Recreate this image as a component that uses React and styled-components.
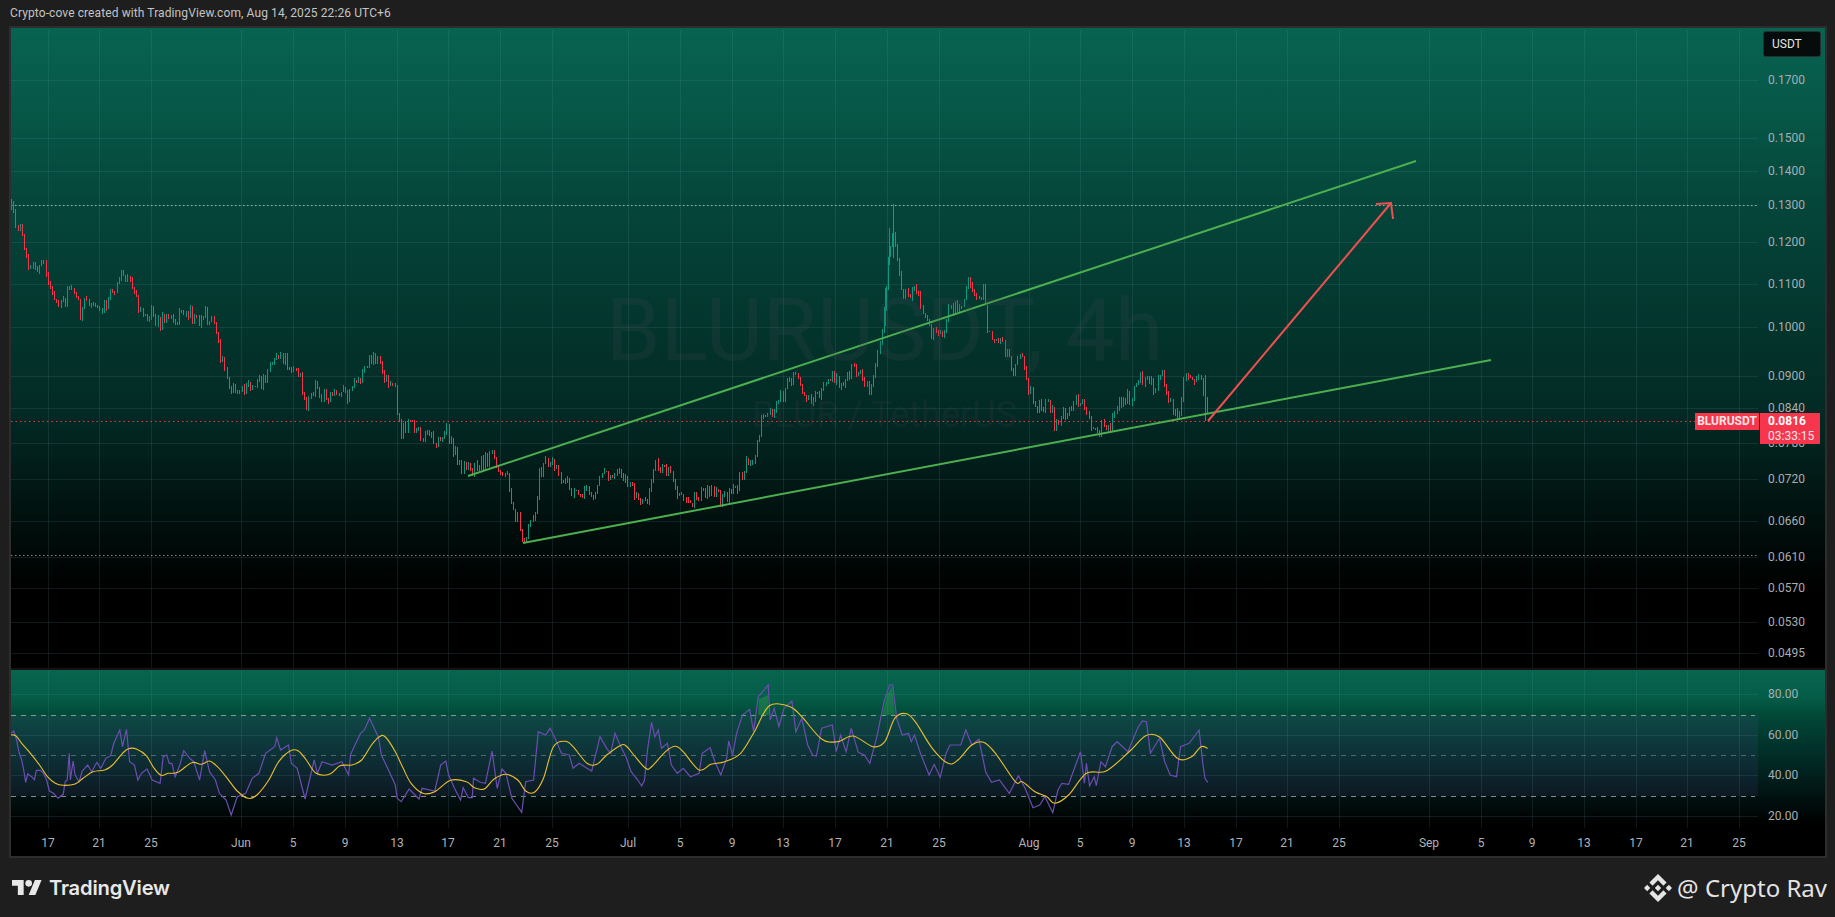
import styled, { createGlobalStyle } from "styled-components";

const GlobalStyle = createGlobalStyle`
  html, body {
    margin: 0;
    padding: 0;
    background: #1e1e1e;
  }
`;

// price axis ticks, y is page px
const PRICE_TICKS = [
  ["0.1700", 80], ["0.1500", 138], ["0.1400", 171], ["0.1300", 205], ["0.1200", 242],
  ["0.1100", 284], ["0.1000", 327], ["0.0900", 376], ["0.0840", 408], ["0.0780", 443],
  ["0.0720", 479], ["0.0660", 521], ["0.0610", 557], ["0.0570", 588], ["0.0530", 622], ["0.0495", 653],
];
const RSI_TICKS = [["80.00", 694], ["60.00", 735], ["40.00", 775], ["20.00", 816]];

const TIME_TICKS = [
  ["17", 48], ["21", 99], ["25", 151], ["Jun", 241], ["5", 293], ["9", 345], ["13", 397], ["17", 448],
  ["21", 500], ["25", 552], ["Jul", 628], ["5", 680], ["9", 732], ["13", 783], ["17", 835], ["21", 887],
  ["25", 939], ["Aug", 1029], ["5", 1080], ["9", 1132], ["13", 1184], ["17", 1236], ["21", 1287],
  ["25", 1339], ["Sep", 1429], ["5", 1481], ["9", 1532], ["13", 1584], ["17", 1636], ["21", 1687], ["25", 1739],
];

// traced closes, taken in three runs off the picture
const scale = (pts, ox, oy, sx, sy) => pts.map(([x, y]) => [ox + x / sx, oy + y / sy]);

const closes = [
  [11, 205],
  ...scale(
    [[35, 60], [50, 100], [65, 140], [75, 180], [85, 240], [100, 235], [130, 225], [145, 270], [155, 320], [175, 335],
     [200, 320], [212, 275], [230, 310], [240, 370], [260, 340], [290, 350], [315, 335], [335, 320], [360, 270], [380, 255],
     [395, 270], [402, 320], [420, 365], [450, 370], [480, 405], [500, 375], [530, 385], [560, 365], [600, 385], [620, 375],
     [650, 410], [660, 490], [685, 560], [695, 610], [720, 585], [750, 600], [790, 570], [810, 515], [835, 500], [870, 520],
     [900, 565], [915, 640], [925, 650], [945, 590], [960, 620], [1000, 605], [1040, 620], [1060, 595], [1085, 555], [1110, 510],
     [1140, 520], [1155, 570], [1185, 610], [1195, 700], [1205, 730], [1222, 705], [1260, 730], [1300, 740], [1310, 770], [1340, 715]],
    0, 190, 3, 3
  ),
  ...scale(
    [[25, 340], [50, 350], [60, 370], [80, 345], [130, 320], [140, 370], [175, 385], [190, 470], [215, 540], [225, 570],
     [240, 510], [260, 460], [268, 370], [285, 340], [310, 345], [330, 380], [365, 420], [400, 420], [430, 440], [455, 370],
     [480, 385], [505, 350], [525, 385], [550, 430], [585, 465], [605, 400], [615, 340], [640, 360], [660, 370], [680, 425],
     [730, 450], [770, 420], [820, 450], [860, 410], [885, 340], [915, 320], [925, 250], [945, 180], [970, 190], [1000, 130],
     [1020, 80], [1050, 100], [1090, 160], [1110, 120], [1150, 75], [1165, 110], [1205, 60], [1240, 90], [1265, 115]],
    450, 350, 3, 3
  ),
  ...scale(
    [[240, 480], [255, 350], [268, 170], [280, 125], [290, 210], [305, 290], [320, 320], [355, 290], [365, 350], [390, 430],
     [425, 430], [445, 370], [480, 345], [505, 285], [530, 320], [550, 300], [560, 400], [580, 440], [610, 470], [640, 540],
     [665, 490], [690, 610], [725, 660], [750, 640], [765, 710], [790, 670], [830, 640], [850, 630], [875, 710], [895, 730],
     [910, 690], [935, 700], [945, 650], [990, 620], [1020, 570], [1045, 550], [1065, 600], [1088, 560], [1105, 640], [1135, 670],
     [1150, 580], [1170, 560], [1200, 555], [1216, 640], [1225, 690]],
    800, 190, 3, 3
  ),
];

const rsiLine = [
  ...scale(
    [[27, 205], [35, 198], [42, 225], [48, 262], [55, 285], [60, 315], [65, 352], [70, 326], [80, 335], [87, 344], [92, 316],
     [102, 316], [110, 325], [118, 345], [125, 378], [135, 385], [147, 400], [160, 388], [165, 350], [170, 345], [175, 265],
     [178, 345], [185, 288], [190, 330], [200, 350], [208, 318], [222, 300], [232, 320], [245, 292], [255, 310], [268, 280],
     [280, 272], [288, 235], [303, 195], [310, 245], [320, 193], [328, 290], [340, 300], [349, 345], [358, 325], [372, 312],
     [385, 345], [405, 355], [413, 275], [422, 270], [428, 295], [435, 295], [443, 335], [455, 300], [465, 257], [480, 280],
     [490, 290], [505, 345], [518, 257], [530, 320], [545, 345], [555, 385], [572, 405], [585, 450], [600, 395], [622, 385],
     [638, 340], [655, 325], [672, 265], [695, 245], [700, 218], [710, 255], [730, 240], [737, 295], [752, 310], [772, 402],
     [795, 285], [803, 325], [815, 290], [840, 300], [865, 290], [882, 330], [887, 268], [903, 228], [912, 205], [922, 195],
     [935, 160], [950, 198], [957, 215], [965, 270], [985, 320], [1000, 360], [1005, 400], [1015, 410], [1035, 372], [1060, 402],
     [1068, 370], [1100, 378], [1115, 300], [1128, 288], [1135, 330], [1150, 370], [1165, 405], [1172, 368], [1185, 398], [1195, 398],
     [1198, 340], [1215, 352], [1228, 355], [1245, 258], [1258, 370], [1270, 312], [1280, 325], [1295, 400], [1320, 442], [1330, 350],
     [1350, 345], [1362, 200], [1380, 210], [1392, 190], [1410, 235], [1420, 265], [1440, 270], [1450, 310], [1465, 295], [1485, 310],
     [1497, 318], [1518, 215], [1535, 250], [1545, 265], [1556, 205]],
    0, 665, 2.53, 3
  ),
  ...scale(
    [[0, 240], [15, 275], [28, 320], [45, 345], [55, 363], [62, 345], [70, 250], [80, 172], [88, 215], [97, 195], [105, 250],
     [120, 235], [130, 300], [145, 325], [160, 310], [178, 335], [200, 325], [208, 265], [228, 248], [240, 290], [255, 330],
     [270, 280], [275, 228], [285, 270], [295, 205], [310, 150], [328, 133], [338, 200], [350, 95], [375, 60], [380, 165],
     [390, 130], [402, 185], [415, 130], [435, 108], [445, 200], [460, 160], [475, 240], [487, 270], [497, 273], [510, 190],
     [537, 180], [547, 260], [558, 210], [572, 260], [585, 190], [603, 262], [618, 270], [632, 295], [650, 215], [668, 110],
     [682, 60], [690, 60], [700, 160], [714, 210], [730, 205], [737, 230], [745, 210], [760, 265], [782, 330], [795, 298],
     [810, 337], [825, 265], [835, 240], [862, 240], [875, 195], [890, 240], [908, 222], [925, 320], [940, 352], [960, 345],
     [985, 385], [1008, 332], [1025, 370], [1045, 428], [1062, 420], [1075, 395], [1095, 443], [1108, 375], [1118, 355], [1135, 358],
     [1165, 260], [1175, 355], [1180, 295], [1188, 362], [1200, 335], [1205, 362], [1217, 290], [1228, 305], [1245, 245], [1258, 230],
     [1285, 260], [1310, 188], [1322, 168], [1332, 170], [1342, 265], [1365, 220], [1378, 290], [1392, 330], [1408, 335], [1418, 245],
     [1440, 235], [1465, 195], [1475, 300], [1480, 340], [1487, 352]],
    620, 665, 2.53, 3
  ),
];

const rsiAvg = [
  ...scale(
    [[27, 210], [40, 212], [55, 235], [75, 262], [100, 300], [120, 335], [140, 355], [160, 361], [190, 357], [210, 340], [235, 320],
     [265, 315], [285, 300], [310, 265], [325, 251], [345, 252], [370, 272], [390, 310], [408, 331], [425, 325], [450, 322], [485, 293],
     [510, 298], [530, 288], [550, 305], [575, 340], [600, 378], [628, 400], [650, 390], [680, 345], [705, 290], [735, 257], [755, 258],
     [775, 285], [800, 325], [835, 327], [860, 302], [890, 300], [915, 285], [940, 240], [960, 215], [975, 216], [1000, 260], [1020, 310],
     [1040, 355], [1070, 385], [1100, 380], [1140, 346], [1180, 350], [1200, 368], [1225, 372], [1250, 342], [1280, 328], [1310, 345],
     [1330, 378], [1352, 382], [1375, 340], [1400, 245], [1430, 229], [1450, 245], [1485, 295], [1510, 298], [1535, 270]],
    0, 665, 2.53, 3
  ),
  ...scale(
    [[0, 242], [15, 242], [35, 270], [65, 310], [80, 305], [115, 260], [140, 244], [160, 260], [200, 315], [230, 298], [265, 290],
     [305, 265], [340, 200], [378, 122], [430, 125], [460, 155], [510, 222], [550, 230], [590, 213], [640, 245], [670, 230], [695, 160],
     [725, 146], [750, 175], [790, 250], [830, 295], [855, 285], [890, 240], [920, 232], [950, 265], [1000, 350], [1018, 350], [1050, 380],
     [1080, 395], [1100, 415], [1135, 390], [1180, 325], [1230, 318], [1290, 258], [1330, 212], [1365, 216], [1410, 280], [1445, 276],
     [1470, 245], [1487, 250]],
    620, 665, 2.53, 3
  ),
];

const polyline = (pts) => pts.map(([x, y]) => `${x.toFixed(1)},${y.toFixed(1)}`).join(" ");

// catmull-rom through the points, the average line is a smooth curve
const smoothPath = (pts) => {
  let d = `M${pts[0][0].toFixed(1)} ${pts[0][1].toFixed(1)}`;
  for (let i = 0; i < pts.length - 1; i++) {
    const p0 = pts[i - 1] || pts[i];
    const p1 = pts[i];
    const p2 = pts[i + 1];
    const p3 = pts[i + 2] || p2;
    const c1x = p1[0] + (p2[0] - p0[0]) / 6;
    const c1y = p1[1] + (p2[1] - p0[1]) / 6;
    const c2x = p2[0] - (p3[0] - p1[0]) / 6;
    const c2y = p2[1] - (p3[1] - p1[1]) / 6;
    d += `C${c1x.toFixed(1)} ${c1y.toFixed(1)} ${c2x.toFixed(1)} ${c2y.toFixed(1)} ${p2[0].toFixed(1)} ${p2[1].toFixed(1)}`;
  }
  return d;
};

const priceAt = (x) => {
  for (let i = 0; i < closes.length - 1; i++) {
    const [x0, y0] = closes[i];
    const [x1, y1] = closes[i + 1];
    if (x >= x0 && x <= x1) return y0 + ((y1 - y0) * (x - x0)) / (x1 - x0 || 1);
  }
  return closes[closes.length - 1][1];
};

const buildBars = () => {
  let seed = 1337;
  const rand = () => {
    seed = (seed * 16807) % 2147483647;
    return seed / 2147483647;
  };
  const step = 2.155;
  let up = "";
  let down = "";
  let prev = priceAt(11.5);
  for (let x = 11.5; x < 1209; x += step) {
    const close = priceAt(x) + (rand() - 0.5) * 15;
    const top = Math.min(prev, close) - rand() * 3;
    const bottom = Math.max(prev, close) + rand() * 3;
    const seg = `M${x.toFixed(1)} ${top.toFixed(1)}V${bottom.toFixed(1)}`;
    if (close < prev) up += seg;
    else down += seg;
    prev = close;
  }
  // the spike and the last drop, too long for the noise above
  up += "M889.5 228V265M885 288V326";
  down += "M893 204V258M1205.5 375V421";
  return { up, down };
};

const bars = buildBars();

const Page = styled.div`
  display: flex;
  flex-direction: column;
  width: 1835px;
  height: 917px;
  background: #1e1e1e;
  overflow: hidden;
`;

const Title = styled.div`
  height: 26px;
  padding: 6px 0 0 10px;
  box-sizing: border-box;
  font: 12px/15px Roboto, sans-serif;
  letter-spacing: 0.1px;
  color: #c4c4c4;
  white-space: nowrap;
`;

const Frame = styled.div`
  display: flex;
  flex-direction: column;
  width: 1818px;
  height: 832px;
  margin-left: 9px;
  box-sizing: border-box;
  border: 2px solid #2d2d2d;
  background: #000;
`;

const Pane = styled.div`
  display: flex;
  flex: none;
  height: ${(p) => p.$height}px;
  background: ${(p) => p.$background};
`;

const Plot = styled.div`
  position: relative;
  width: 1747px;
  flex: none;
`;

const ChartSvg = styled.svg`
  display: block;
`;

const Watermark = styled.div`
  position: absolute;
  left: 0;
  right: 0;
  top: 251px;
  display: flex;
  flex-direction: column;
  align-items: center;
  color: rgba(70, 70, 85, 0.18);
  font-family: Roboto, sans-serif;
  pointer-events: none;
`;

const WatermarkTitle = styled.div`
  font-size: 88px;
  line-height: 102px;
`;

const WatermarkSub = styled.div`
  margin-top: 13px;
  font-size: 36px;
  line-height: 42px;
`;

const Axis = styled.div`
  position: relative;
  flex: 1;
`;

const AxisLabel = styled.span`
  position: absolute;
  left: 10px;
  transform: translateY(-50%);
  font: 12px/14px Roboto, sans-serif;
  color: #a9adb2;
`;

const CurrencyButton = styled.div`
  position: absolute;
  top: 3px;
  left: 5px;
  width: 58px;
  height: 26px;
  box-sizing: border-box;
  padding-left: 8px;
  border: 1px solid #26302e;
  border-radius: 3px;
  background: #060b0b;
  font: 12px/24px Roboto, sans-serif;
  color: #e4e6e6;
`;

const PriceTag = styled.div`
  position: absolute;
  top: 385px;
  left: 2px;
  width: 60px;
  height: 31px;
  box-sizing: border-box;
  padding: 1px 0 0 8px;
  background: #f5364c;
  font: 12px/15px Roboto, sans-serif;
  color: #fbe4e6;
`;

const PriceValue = styled.div`
  font-weight: 700;
  color: #fff;
`;

const SymbolTag = styled.div`
  position: absolute;
  top: 0;
  right: calc(100% + 1px);
  width: 64px;
  height: 17px;
  background: #f5364c;
  font: 700 12px/17px Roboto, sans-serif;
  color: #fbe4e6;
  text-align: center;
`;

const Divider = styled.div`
  flex: none;
  height: 2px;
  background: #131313;
`;

const TimeAxis = styled.div`
  position: relative;
  flex: 1;
`;

const TimeLabel = styled.span`
  position: absolute;
  top: 8px;
  transform: translateX(-50%);
  font: 12px/14px Roboto, sans-serif;
  color: #b0b3b6;
`;

const Footer = styled.div`
  display: flex;
  flex: 1;
  align-items: center;
  justify-content: space-between;
  padding: 0 8px 0 12px;
`;

const Brand = styled.div`
  display: flex;
  align-items: center;
  gap: 7px;
  font: 600 20.2px/26px Inter, sans-serif;
  letter-spacing: -0.2px;
  color: #e8e8e8;
`;

const Author = styled.div`
  display: flex;
  align-items: center;
  gap: 5px;
  font: 400 24px/34px "Noto Sans", sans-serif;
  color: #e4e4e4;
`;

const MAIN_GRADIENT = `linear-gradient(180deg, #086351 0%, #065646 14%, #05453a 28%, #03342c 48%, #032924 61%, #011411 74%, #000 88%)`;
const RSI_GRADIENT = `linear-gradient(180deg, #09654f 0%, #045c47 18%, #024636 30%, #012f29 52%, #011a18 72%, #000 98%)`;
const GRID = "rgba(105, 165, 175, 0.14)";

const VerticalGrid = ({ y1, y2 }) =>
  TIME_TICKS.map(([label, x], i) => (
    <line key={label + i} x1={x + 0.5} x2={x + 0.5} y1={y1} y2={y2} stroke={GRID} />
  ));

const HorizontalGrid = ({ ticks }) =>
  ticks.map(([label, y]) => <line key={label} x1={11} x2={1758} y1={y + 0.5} y2={y + 0.5} stroke={GRID} />);

const PriceChart = () => (
  <ChartSvg width="1747" height="640" viewBox="11 28 1747 640">
    <VerticalGrid y1={30} y2={668} />
    <HorizontalGrid ticks={PRICE_TICKS} />
    <line x1="11" x2="1758" y1="205.5" y2="205.5" stroke="rgba(255,255,255,0.55)" strokeDasharray="1.5 2.5" />
    <line x1="11" x2="1758" y1="555.5" y2="555.5" stroke="rgba(255,255,255,0.5)" strokeDasharray="1.5 2.5" />
    <line x1="11" x2="1758" y1="421.5" y2="421.5" stroke="#f23645" strokeDasharray="1.5 3" />
    <g shapeRendering="crispEdges" fill="none" strokeWidth="1">
      <path d={bars.up} stroke="#089981" />
      <path d={bars.down} stroke="#f5334a" />
    </g>
    <line x1="468" y1="476" x2="1416" y2="161" stroke="#4caf50" strokeWidth="2" />
    <line x1="523" y1="543" x2="1491" y2="360" stroke="#4caf50" strokeWidth="2" />
    <g stroke="#ef4f50" strokeWidth="2" fill="none">
      <line x1="1208" y1="421" x2="1391" y2="203" />
      <polyline points="1376,204 1391,203 1393,219" />
    </g>
  </ChartSvg>
);

const RsiChart = () => (
  <ChartSvg width="1747" height="158" viewBox="11 670 1747 158">
    <rect x="11" y="715" width="1748" height="81" fill="rgba(126,87,194,0.1)" />
    <VerticalGrid y1={670} y2={828} />
    <HorizontalGrid ticks={RSI_TICKS} />
    <line x1="11" x2="1755" y1="715.5" y2="715.5" stroke="rgba(205,205,205,0.6)" strokeDasharray="5 5" />
    <line x1="11" x2="1755" y1="755.5" y2="755.5" stroke="rgba(205,205,205,0.35)" strokeDasharray="5 5" />
    <line x1="11" x2="1755" y1="796.5" y2="796.5" stroke="rgba(205,205,205,0.65)" strokeDasharray="5 5" />
    <polygon points="758,715 759,699 768,695 769,715" fill="rgba(60,175,90,0.35)" />
    <polygon points="882,715 887,695 892,686 895,715" fill="rgba(60,175,90,0.35)" />
    <polyline points={polyline(rsiLine)} fill="none" stroke="#6c4db0" strokeWidth="1.2" />
    <path d={smoothPath(rsiAvg)} fill="none" stroke="#ecc02c" strokeWidth="1.1" />
  </ChartSvg>
);

const TradingViewLogo = () => (
  <svg width="30" height="15" viewBox="0 4 36 18" fill="#e8e8e8">
    <path d="M14 22H7V11H0V4h14v18zM28 22h-8l7.5-18h8L28 22z" />
    <circle cx="20" cy="8" r="4" />
  </svg>
);

const BinanceLogo = () => (
  <svg width="28" height="28" viewBox="0 0 32 32" fill="#e4e4e4">
    <path d="M9.8 13.4 16 7.2l6.2 6.2 3.6-3.6L16 0 6.2 9.8l3.6 3.6zM0 16l3.6-3.6L7.2 16l-3.6 3.6L0 16zm9.8 2.6 6.2 6.2 6.2-6.2 3.6 3.6L16 32l-9.8-9.8 3.6-3.6zM24.8 16l3.6-3.6L32 16l-3.6 3.6-3.6-3.6zM19.65 16 16 12.35 12.35 16 16 19.65 19.65 16z" />
  </svg>
);

export default function App() {
  return (
    <Page>
      <GlobalStyle />
      <Title>Crypto-cove created with TradingView.com, Aug 14, 2025 22:26 UTC+6</Title>
      <Frame>
        <Pane $height={640} $background={MAIN_GRADIENT}>
          <Plot>
            <Watermark>
              <WatermarkTitle>BLURUSDT, 4h</WatermarkTitle>
              <WatermarkSub>BLUR / TetherUS</WatermarkSub>
            </Watermark>
            <PriceChart />
          </Plot>
          <Axis>
            <CurrencyButton>USDT</CurrencyButton>
            {PRICE_TICKS.map(([label, y]) => (
              <AxisLabel key={label} style={{ top: y - 28 }}>
                {label}
              </AxisLabel>
            ))}
            <PriceTag>
              <SymbolTag>BLURUSDT</SymbolTag>
              <PriceValue>0.0816</PriceValue>
              03:33:15
            </PriceTag>
          </Axis>
        </Pane>
        <Divider />
        <Pane $height={158} $background={RSI_GRADIENT}>
          <Plot>
            <RsiChart />
          </Plot>
          <Axis>
            {RSI_TICKS.map(([label, y]) => (
              <AxisLabel key={label} style={{ top: y - 670 }}>
                {label}
              </AxisLabel>
            ))}
          </Axis>
        </Pane>
        <TimeAxis>
          {TIME_TICKS.map(([label, x], i) => (
            <TimeLabel key={label + i} style={{ left: x - 11 }}>
              {label}
            </TimeLabel>
          ))}
        </TimeAxis>
      </Frame>
      <Footer>
        <Brand>
          <TradingViewLogo />
          TradingView
        </Brand>
        <Author>
          <BinanceLogo />@ Crypto Rav
        </Author>
      </Footer>
    </Page>
  );
}
